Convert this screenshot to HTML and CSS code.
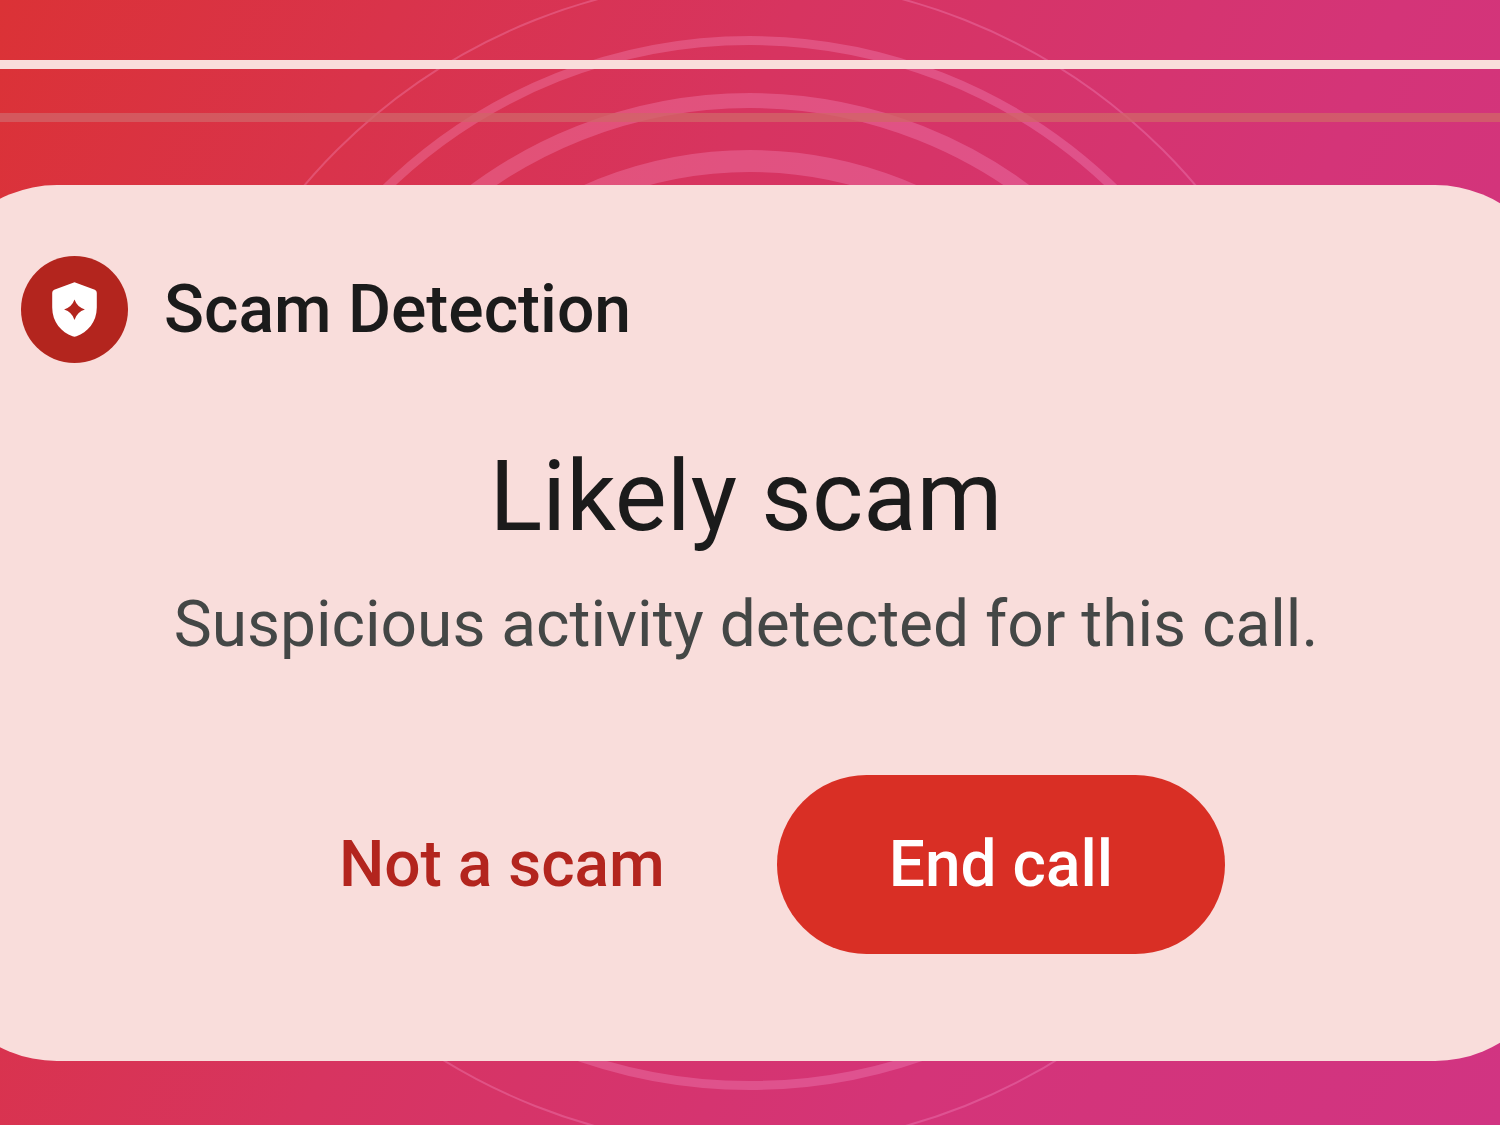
FILE: index.html
```
<!DOCTYPE html>
<html lang="en">
<head>
	<meta charset="UTF-8">
	<meta name="viewport" content="width=device-width, initial-scale=1.0">
	<title>Scam Detection</title>
	<link rel="stylesheet" href="styles.css">
</head>
<body>
	<div class="screen">
		<svg class="rings" viewBox="0 0 1170 1170" aria-hidden="true">
			<circle cx="585" cy="585" r="584" stroke-width="2"/>
			<circle cx="585" cy="585" r="522.5" stroke-width="9"/>
			<circle cx="585" cy="585" r="462.5" stroke-width="15"/>
			<circle cx="585" cy="585" r="402" stroke-width="22"/>
		</svg>
		<div class="stripe"></div>
		<div class="stripe stripe-dim"></div>
		<main class="card">
			<header class="card-header">
				<svg class="badge" viewBox="0 0 108 108" aria-hidden="true">
					<circle cx="54" cy="54" r="54" fill="#b3251e"/>
					<path fill="#fff" d="M54 26.500 L74.500 34 Q76.500 35 76.500 37 V52 C76.500 67 67 77 56 81 Q54 81.800 52 81 C41 77 31.500 67 31.500 52 V37 Q31.500 35 33.500 34 Z"/>
					<path fill="#b3251e" d="M54 44 Q56.500 51.500 64.500 54 Q56.500 56.500 54 64.500 Q51.500 56.500 43.500 54 Q51.500 51.500 54 44 Z"/>
				</svg>
				<h2 class="label">Scam Detection</h2>
			</header>
			<h1 class="title">Likely scam</h1>
			<p class="text">Suspicious activity detected for this call.</p>
			<div class="actions">
				<button class="btn" type="button">Not a scam</button>
				<button class="btn btn-end" type="button">End call</button>
			</div>
		</main>
	</div>
</body>
</html>
```
FILE: styles.css
```
*{
	box-sizing: border-box;
}
body{
	margin: 0;
	font-family: Roboto, sans-serif;
	color: #1b1b1b;
}
.screen{
	position: relative;
	min-height: 100vh;
	padding: 60px 0 64px;
	overflow: hidden;
	background: linear-gradient(114deg, #db3236 0%, #d73460 40%, #d43478 70%, #d13482 100%);
}
/* rings behind the card */
.rings{
	position: absolute;
	left: 50%;
	top: 50%;
	width: 1170px;
	height: 1170px;
	transform: translate(-50%,-50%);
	fill: none;
	stroke: rgba(255,170,225,.25);
}
.stripe{
	position: relative;
	height: 9px;
	margin-bottom: 44px;
	background-color: #f9dddb;
}
.stripe-dim{
	margin-bottom: 63px;
	background-color: rgba(210,100,104,.77);
}
/* the card runs past both edges of the screen */
.card{
	position: relative;
	margin: 0 -60px 0 -68px;
	padding: 71px 89px 107px;
	border-radius: 125px;
	background-color: #f9dddb;
	text-align: center;
}
.card-header{
	display: flex;
	align-items: center;
	gap: 36px;
}
.badge{
	width: 107px;
	height: 107px;
}
.label,.title,.text{
	margin: 0;
}
.label{
	font-size: 66px;
	line-height: 80px;
	font-weight: 500;
}
.title{
	margin-top: 74px;
	font-size: 98px;
	line-height: 120px;
	font-weight: 400;
}
.text{
	margin-top: 28px;
	font-size: 64px;
	line-height: 80px;
	color: #444746;
}
.actions{
	display: flex;
	justify-content: center;
	margin-top: 110px;
	padding-right: 40px;
}
.btn{
	height: 179px;
	padding: 0 112px;
	border: 0;
	border-radius: 90px;
	background: none;
	font-family: inherit;
	font-size: 64px;
	font-weight: 500;
	color: #b3251e;
	cursor: pointer;
}
.btn-end{
	background-color: #d92f25;
	color: #fff;
}
```
